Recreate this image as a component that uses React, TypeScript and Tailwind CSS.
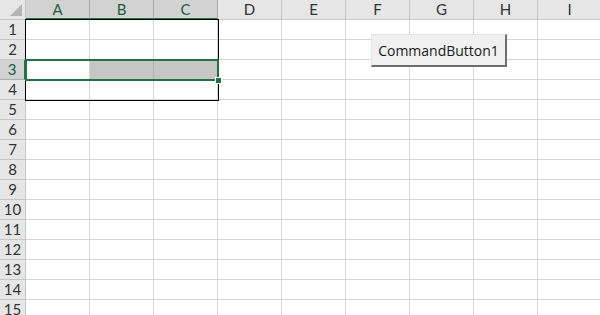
import React from "react";

const cols = ["A", "B", "C", "D", "E", "F", "G", "H", "I"];
const rows = Array.from({ length: 15 }, (_, i) => i + 1);

export default function App() {
  return (
    <div className="relative w-[600px] h-[315px] overflow-hidden bg-white" style={{ fontFamily: "Lato, 'Liberation Sans', sans-serif" }}>
      <div className="grid grid-cols-[26px_repeat(9,64px)] auto-rows-[20px] w-[602px]">
        {/* corner */}
        <div className="relative bg-[#e6e6e6] border-r border-b border-[#c6c6c6]">
          <svg className="absolute right-[3px] bottom-[3px]" width="12" height="12" viewBox="0 0 12 12">
            <polygon points="12,0 12,12 0,12" fill="#b4b4b4" />
          </svg>
        </div>
        {cols.map((c, i) => {
          const sel = i < 3;
          return (
            <div
              key={c}
              className={
                sel
                  ? "flex items-center justify-center bg-[#d2d2d2] border-r border-r-[#ababab] border-b-2 border-b-[#217346] text-[15px] text-[#1d5f3a] leading-none pt-[1px]"
                  : "flex items-center justify-center bg-[#e6e6e6] border-r border-b border-[#c6c6c6] text-[15px] text-[#333] leading-none"
              }
            >
              {c}
            </div>
          );
        })}
        {rows.map((r) => (
          <React.Fragment key={r}>
            <div
              className={
                r === 3
                  ? "flex items-center justify-center bg-[#d2d2d2] border-r-2 border-r-[#217346] border-b border-b-[#ababab] text-[15px] text-[#1d5f3a] leading-none"
                  : "flex items-center justify-center bg-[#e6e6e6] border-r border-b border-[#c6c6c6] text-[15px] text-[#333] leading-none"
              }
            >
              {r}
            </div>
            {cols.map((c, ci) => (
              <div
                key={c}
                className={
                  r === 3 && (ci === 1 || ci === 2)
                    ? "bg-[#c6c6c6] border-r border-b border-[#b0b0b0]"
                    : "border-r border-b border-[#d4d4d4]"
                }
              />
            ))}
          </React.Fragment>
        ))}
      </div>

      {/* black outline A1:C4 */}
      <div className="absolute left-[25px] top-[19px] w-[194px] h-[82px] border border-black pointer-events-none" />

      {/* selection border A3:C3 */}
      <div className="absolute left-[25px] top-[59px] w-[194px] h-[22px] border-2 border-[#217346]" />
      {/* fill handle */}
      <div className="absolute left-[215px] top-[77px] w-[7px] h-[7px] bg-[#217346] border border-white" />

      {/* command button */}
      <div
        className="absolute left-[371px] top-[34px] w-[136px] h-[33px] bg-[#f0f0f0] border-t border-l border-t-[#e3e3e3] border-l-[#e3e3e3] border-r-2 border-b-2 border-r-[#6d6d6d] border-b-[#6d6d6d] flex items-center justify-center text-[14px] text-[#1a1a1a]"
        style={{ fontFamily: "'Open Sans', sans-serif" }}
      >
        CommandButton1
      </div>
    </div>
  );
}
